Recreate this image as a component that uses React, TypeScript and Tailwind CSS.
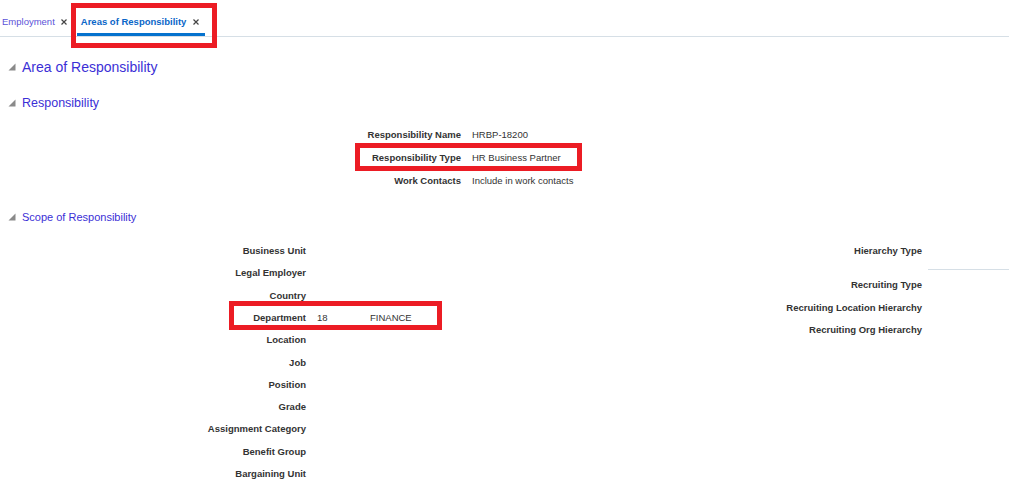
import React from "react";

const font = { fontFamily: '"Liberation Sans", Arial, sans-serif' };

function CloseIcon() {
  return (
    <svg width="6" height="6" viewBox="0 0 6 6" className="shrink-0">
      <path d="M0.5 0.5 L5.5 5.5 M5.5 0.5 L0.5 5.5" stroke="#444" strokeWidth="1.2" />
    </svg>
  );
}

function Disclosure() {
  return (
    <svg width="8" height="8" viewBox="0 0 8 8" className="shrink-0">
      <path d="M7.5 0.5 L7.5 7.5 L0.5 7.5 Z" fill="#8a8a8a" />
    </svg>
  );
}

function SectionHeader({ title, size }: { title: string; size: string }) {
  return (
    <div className="flex items-center h-[20px] pl-[8px] gap-[6px]">
      <Disclosure />
      <span className={`${size} text-[#3b2fd6]`}>{title}</span>
    </div>
  );
}

const respRows = [
  { label: "Responsibility Name", value: "HRBP-18200" },
  { label: "Responsibility Type", value: "HR Business Partner" },
  { label: "Work Contacts", value: "Include in work contacts" },
];

const scopeLeft = [
  "Business Unit",
  "Legal Employer",
  "Country",
  "Department",
  "Location",
  "Job",
  "Position",
  "Grade",
  "Assignment Category",
  "Benefit Group",
  "Bargaining Unit",
];

const scopeRight = ["Recruiting Type", "Recruiting Location Hierarchy", "Recruiting Org Hierarchy"];

export default function App() {
  return (
    <div className="relative w-[1009px] h-[500px] bg-white overflow-hidden text-[#333]" style={font}>
      {/* Tabs */}
      <div className="flex h-[37px] border-b border-[#d6dfe6] whitespace-nowrap">
        <div className="flex items-center h-[36px] pt-[11px] pl-[2px] pr-[10px] border-b-[3px] border-transparent">
          <span className="text-[9.5px] text-[#5b52d8]">Employment</span>
          <span className="ml-[6px]">
            <CloseIcon />
          </span>
        </div>
        <div className="flex items-center h-[36px] pt-[11px] pl-[4px] border-b-[3px] border-[#0572ce] w-[128px]">
          <span className="text-[9.5px] font-bold text-[#0a66c8]">Areas of Responsibility</span>
          <span className="ml-[7px]">
            <CloseIcon />
          </span>
        </div>
      </div>

      <div className="mt-[20px]">
        <SectionHeader title="Area of Responsibility" size="text-[14px]" />
      </div>
      <div className="mt-[16px]">
        <SectionHeader title="Responsibility" size="text-[12.5px]" />
      </div>

      <div className="mt-[11px] flex flex-col">
        {respRows.map((r) => (
          <div key={r.label} className="flex items-center h-[23px] text-[9.5px]">
            <div className="w-[461px] text-right font-bold">{r.label}</div>
            <div className="ml-[11px]">{r.value}</div>
          </div>
        ))}
      </div>

      <div className="mt-[14px]">
        <SectionHeader title="Scope of Responsibility" size="text-[11px]" />
      </div>

      <div className="mt-[13px] flex text-[9.5px]">
        <div className="w-[504px] flex flex-col">
          {scopeLeft.map((l) => (
            <div key={l} className="flex items-center h-[22.3px]">
              <div className="w-[306px] text-right font-bold">{l}</div>
              {l === "Department" && (
                <div className="flex ml-[11px]">
                  <span className="w-[53px]">18</span>
                  <span>FINANCE</span>
                </div>
              )}
            </div>
          ))}
        </div>
        <div className="flex-1 flex flex-col">
          <div className="flex h-[30.3px]">
            <div className="w-[418px] h-[22.3px] flex items-center justify-end font-bold">Hierarchy Type</div>
            <div className="ml-[6px] w-[81px] border-b border-[#d6dfe6]" />
          </div>
          <div className="h-[4px]" />
          {scopeRight.map((l) => (
            <div key={l} className="flex items-center h-[22.3px]">
              <div className="w-[418px] text-right font-bold">{l}</div>
            </div>
          ))}
        </div>
      </div>

      {/* annotation boxes */}
      <div className="absolute left-[71px] top-[3px] w-[146px] h-[45px] border-[5px] border-[#ec1c24]" />
      <div className="absolute left-[355px] top-[143px] w-[227px] h-[28px] border-[5px] border-[#ec1c24]" />
      <div className="absolute left-[229px] top-[301px] w-[213px] h-[29px] border-[5px] border-[#ec1c24]" />
    </div>
  );
}
